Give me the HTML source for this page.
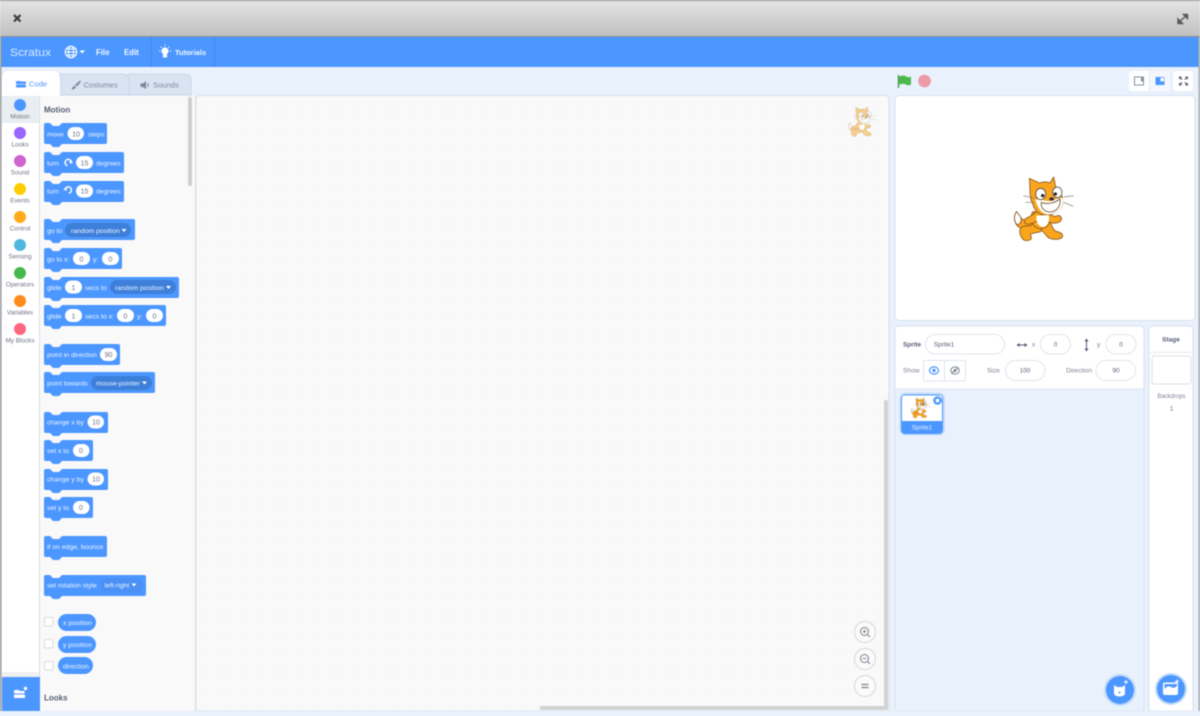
<!DOCTYPE html>
<html><head><meta charset="utf-8"><title>Scratux</title>
<style>
html,body{margin:0;padding:0;width:1200px;height:711px;overflow:hidden;background:#e9f1fc}
#root{position:absolute;left:0;top:0;width:1200px;height:711px;filter:blur(.4px)}
svg text{font-family:"Liberation Sans",sans-serif}
.w{fill:#eef4ff;font-size:6.85px}
.n{fill:#6b7185;font-size:7px;text-anchor:middle}
.c{fill:#6f7585;font-size:6.4px;text-anchor:middle}
.g{fill:#7d8392;font-size:6.6px}
.b{fill:#575e75;font-size:6.4px;font-weight:bold}
.v{fill:#575e75;font-size:6.4px;text-anchor:middle}
.bl{fill:#4c97ff}
.dd{fill:#3d7fd9}
</style></head>
<body><div id="root">
<svg width="1200" height="711" viewBox="0 0 1200 711" xmlns="http://www.w3.org/2000/svg">
<defs>
<linearGradient id="tb" x1="0" y1="0" x2="0" y2="1"><stop offset="0" stop-color="#e4e4e4"/><stop offset="1" stop-color="#bfbfbf"/></linearGradient>
<pattern id="dots" width="14" height="14" patternUnits="userSpaceOnUse"><rect x="6" y="6" width="1.2" height="1.2" fill="#ececec"/></pattern>
<symbol id="cat" viewBox="0 0 270 255">
<g stroke="#8a5a1e" stroke-width="2.6" stroke-linejoin="round">
<path d="M96 164C76 172 58 162 50 140C40 152 42 176 56 186C70 196 92 194 108 186Z" fill="#faa51d"/>
<path d="M50 140C40 152 42 170 52 180C62 176 66 168 62 156Z" fill="#fff"/>
<path d="M108 160L92 182L70 184C56 188 56 206 68 222C76 230 96 228 94 216C92 210 90 208 94 206L122 200L138 176Z" fill="#faa51d"/>
<path d="M118 168C114 186 128 200 140 212C146 224 174 226 186 218C192 208 182 202 172 200C162 198 158 190 154 178L150 160Z" fill="#faa51d"/>
<path d="M98 140C88 160 94 184 116 190C138 194 156 176 154 144Z" fill="#faa51d"/>
<path d="M150 146C158 154 166 156 172 152C182 150 188 160 182 168C172 178 152 176 138 166Z" fill="#faa51d"/>
<path d="M112 138C102 146 90 156 78 160C70 164 72 178 84 178C98 176 116 168 128 154Z" fill="#faa51d"/>
<path d="M88 40L118 54C130 50 142 50 150 54L161 36L168 70C196 92 198 130 160 146C126 158 104 142 98 116C86 96 92 68 88 40Z" fill="#faa51d"/>
</g>
<path d="M110 152C106 170 116 186 130 186C144 184 150 166 146 150Z" fill="#fff"/>
<path d="M106 104C112 126 124 150 150 148C176 146 192 126 190 100C176 96 166 106 152 108C136 110 122 100 106 104Z" fill="#fff"/>
<path d="M124 112C142 120 164 114 180 102C184 124 168 142 148 141C132 140 122 128 124 112Z" fill="#fff" stroke="#6a4a1e" stroke-width="2.4"/>
<ellipse cx="122" cy="87" rx="15" ry="17" fill="#fff" stroke="#444" stroke-width="2.4"/>
<ellipse cx="172" cy="82" rx="14" ry="16" fill="#fff" stroke="#444" stroke-width="2.4"/>
<circle cx="128" cy="92" r="5" fill="#222"/><circle cx="166" cy="87" r="5" fill="#222"/>
<ellipse cx="155" cy="102" rx="7" ry="5" fill="#2a2a3a"/>
<path d="M70 92L104 100M76 112L102 112M192 96L222 92M190 112L220 124" stroke="#777" stroke-width="2" fill="none"/>
</symbol>
</defs>

<!-- window title bar -->
<rect x="0" y="0" width="1200" height="37" fill="url(#tb)"/>
<rect x="0" y="0" width="1200" height="1" fill="#8f8f8f"/>
<rect x="0" y="36" width="1200" height="1" fill="#8d8d8d"/>
<path d="M14 15L20.500 21.500M20.500 15L14 21.500" stroke="#3c3c3c" stroke-width="2.200"/>
<g stroke="#5a5a5a" stroke-width="1.400" fill="#5a5a5a"><path d="M1179 22L1187 15" fill="none"/><path d="M1183.500 14.500H1187.500V18.500Z"/><path d="M1178 19V23.500H1182.500Z"/></g>

<!-- menu bar -->
<rect x="0" y="37" width="1200" height="30" fill="#4c97ff"/>
<text x="10" y="56" font-size="11" fill="#dbe9ff" textLength="41" lengthAdjust="spacingAndGlyphs">Scratux</text>
<g fill="none" stroke="#fff" stroke-width="1"><circle cx="71" cy="52" r="5.800"/><ellipse cx="71" cy="52" rx="2.600" ry="5.800"/><path d="M65.200 52H76.800M66 49H76M66 55H76"/></g>
<path d="M79.500 50.500H85L82.250 53.500Z" fill="#fff"/>
<text x="96" y="55" font-size="7.800" font-weight="bold" fill="#fff" fill-opacity=".93">File</text>
<text x="124" y="55" font-size="7.800" font-weight="bold" fill="#fff" fill-opacity=".93">Edit</text>
<rect x="151" y="37" width="1" height="30" fill="#4389e8"/><rect x="214" y="37" width="1" height="30" fill="#4389e8"/>
<g fill="#fff"><circle cx="165" cy="51" r="3.600"/><rect x="163" y="54" width="4" height="3.500"/></g>
<path d="M165 44.500V45.800M159 51H160.200M170 51H171.200M160.700 46.700L161.600 47.600M169.300 46.700L168.400 47.600" stroke="#fff" stroke-width="1"/>
<text x="175" y="55" font-size="7.500" font-weight="bold" fill="#fff" fill-opacity=".93">Tutorials</text>

<!-- body bg -->
<rect x="0" y="67" width="1200" height="644" fill="#e9f1fc"/>
<rect x="0" y="37" width="1.500" height="674" fill="#9a9a9a"/>
<rect x="1198.500" y="37" width="1.500" height="674" fill="#a8a8a8"/>

<!-- tabs -->
<path d="M129 95V81Q129 74 122 74H60V95Z" fill="#d9e3f2" stroke="#ccd6e6" stroke-width="1"/>
<path d="M191 95V81Q191 74 184 74H129Q127 74 129 78V95Z" fill="#d9e3f2" stroke="#ccd6e6" stroke-width="1"/>
<path d="M2 96V79Q2 71 10 71H52Q60 71 60 79V96Z" fill="#fff"/>
<g fill="#4c97ff"><rect x="16" y="81" width="5" height="3" rx=".8"/><rect x="21" y="81.500" width="5" height="2.500"/><rect x="16" y="84.500" width="10" height="3" rx=".8"/></g>
<text x="29" y="86.500" font-size="7.600" fill="#4c97ff">Code</text>
<path d="M71.500 89L74 85.500L76 87.500L73.500 89.500ZM75 85L80 80.500L81 81.500L77 86.500Z" fill="#7f8694"/>
<text x="83.500" y="87.500" font-size="7.600" fill="#80889a">Costumes</text>
<path d="M140.500 83.500H143L146 81V89L143 87H140.500Z" fill="#7f8694"/><path d="M147.500 83.200Q149 85 147.500 86.800" stroke="#7f8694" fill="none"/>
<text x="153" y="87.500" font-size="7.600" fill="#80889a">Sounds</text>

<!-- categories -->
<rect x="2" y="96" width="37" height="615" fill="#fff"/>
<rect x="2" y="96" width="37" height="27" fill="#e9eef2"/>
<rect x="39" y="96" width="1" height="615" fill="#d9dfe7"/>
<circle cx="20" cy="105" r="6" fill="#4c97ff"/><text class="c" x="20" y="118.500">Motion</text>
<circle cx="20" cy="133" r="6" fill="#9966ff"/><text class="c" x="20" y="146.500">Looks</text>
<circle cx="20" cy="161" r="6" fill="#cf63cf"/><text class="c" x="20" y="174.500">Sound</text>
<circle cx="20" cy="189" r="6" fill="#ffcc00"/><text class="c" x="20" y="202.500">Events</text>
<circle cx="20" cy="217" r="6" fill="#ffab19"/><text class="c" x="20" y="230.500">Control</text>
<circle cx="20" cy="245" r="6" fill="#4fb8dc"/><text class="c" x="20" y="258.500">Sensing</text>
<circle cx="20" cy="273" r="6" fill="#47b84f"/><text class="c" x="20" y="286.500">Operators</text>
<circle cx="20" cy="301" r="6" fill="#ff8c1a"/><text class="c" x="20" y="314.500">Variables</text>
<circle cx="20" cy="329" r="6" fill="#ff6680"/><text class="c" x="20" y="342.500">My Blocks</text>
<rect x="2" y="672" width="37" height="5" fill="#e4e4e4" opacity=".6"/>
<rect x="2" y="677" width="38" height="34" fill="#4c97ff"/>
<g fill="#fff"><rect x="14" y="690" width="5.500" height="3.500" rx=".8"/><rect x="19.500" y="691" width="5" height="2.500"/><rect x="14" y="694.500" width="11" height="3.500" rx=".8"/><circle cx="25.500" cy="688.500" r="1.700"/></g>

<!-- palette -->
<rect x="40" y="96" width="155" height="615" fill="#f9f9f9"/>
<rect x="195" y="96" width="1" height="615" fill="#d9dfe7"/>
<rect x="188" y="97" width="4" height="89" rx="2" fill="#cfcfcf"/>
<text x="44" y="112.500" font-size="8" font-weight="bold" fill="#575e75">Motion</text>
<text x="44" y="700.500" font-size="8" font-weight="bold" fill="#575e75">Looks</text>

<!-- blocks -->
<g class="bl">
<path d="M44 125q0-2 2-2h4l3 3h6l3-3h43q2 0 2 2v17q0 2-2 2h-43l-3 3h-6l-3-3h-4q-2 0-2-2z"/>
<path d="M44 154q0-2 2-2h4l3 3h6l3-3h60q2 0 2 2v17q0 2-2 2h-60l-3 3h-6l-3-3h-4q-2 0-2-2z"/>
<path d="M44 183q0-2 2-2h4l3 3h6l3-3h60q2 0 2 2v17q0 2-2 2h-60l-3 3h-6l-3-3h-4q-2 0-2-2z"/>
<path d="M44 221q0-2 2-2h4l3 3h6l3-3h71q2 0 2 2v17q0 2-2 2h-71l-3 3h-6l-3-3h-4q-2 0-2-2z"/>
<path d="M44 250q0-2 2-2h4l3 3h6l3-3h58q2 0 2 2v17q0 2-2 2h-58l-3 3h-6l-3-3h-4q-2 0-2-2z"/>
<path d="M44 279q0-2 2-2h4l3 3h6l3-3h115q2 0 2 2v17q0 2-2 2h-115l-3 3h-6l-3-3h-4q-2 0-2-2z"/>
<path d="M44 307q0-2 2-2h4l3 3h6l3-3h102q2 0 2 2v17q0 2-2 2h-102l-3 3h-6l-3-3h-4q-2 0-2-2z"/>
<path d="M44 346q0-2 2-2h4l3 3h6l3-3h56q2 0 2 2v17q0 2-2 2h-56l-3 3h-6l-3-3h-4q-2 0-2-2z"/>
<path d="M44 374q0-2 2-2h4l3 3h6l3-3h91q2 0 2 2v17q0 2-2 2h-91l-3 3h-6l-3-3h-4q-2 0-2-2z"/>
<path d="M44 414q0-2 2-2h4l3 3h6l3-3h44q2 0 2 2v17q0 2-2 2h-44l-3 3h-6l-3-3h-4q-2 0-2-2z"/>
<path d="M44 442q0-2 2-2h4l3 3h6l3-3h29q2 0 2 2v17q0 2-2 2h-29l-3 3h-6l-3-3h-4q-2 0-2-2z"/>
<path d="M44 471q0-2 2-2h4l3 3h6l3-3h44q2 0 2 2v17q0 2-2 2h-44l-3 3h-6l-3-3h-4q-2 0-2-2z"/>
<path d="M44 499q0-2 2-2h4l3 3h6l3-3h29q2 0 2 2v17q0 2-2 2h-29l-3 3h-6l-3-3h-4q-2 0-2-2z"/>
<path d="M44 538q0-2 2-2h4l3 3h6l3-3h43q2 0 2 2v17q0 2-2 2h-43l-3 3h-6l-3-3h-4q-2 0-2-2z"/>
<path d="M44 577q0-2 2-2h4l3 3h6l3-3h82q2 0 2 2v17q0 2-2 2h-82l-3 3h-6l-3-3h-4q-2 0-2-2z"/>
<rect x="58" y="614" width="38" height="17" rx="8.500"/>
<rect x="58" y="636" width="38" height="17" rx="8.500"/>
<rect x="58" y="657" width="35" height="17" rx="8.500"/>
</g>
<!-- dropdowns -->
<g class="dd">
<rect x="65" y="223" width="66" height="14" rx="7"/>
<rect x="110" y="280" width="66" height="14" rx="7"/>
<rect x="91" y="376" width="61" height="14" rx="7"/>
<rect x="100" y="578.500" width="43" height="14" rx="7" fill="#4a90f5"/>
</g>
<!-- white pills -->
<g fill="#fff">
<rect x="67.500" y="127" width="16.500" height="13" rx="6.500"/>
<rect x="76" y="156" width="17" height="13" rx="6.500"/>
<rect x="76" y="184.500" width="17" height="13" rx="6.500"/>
<rect x="73" y="252" width="17" height="13" rx="6.500"/><rect x="102" y="252" width="17" height="13" rx="6.500"/>
<rect x="65" y="280.500" width="17" height="13" rx="6.500"/>
<rect x="65" y="309" width="17" height="13" rx="6.500"/><rect x="117" y="309" width="17" height="13" rx="6.500"/><rect x="146" y="309" width="17" height="13" rx="6.500"/>
<rect x="100" y="348" width="17" height="13" rx="6.500"/>
<rect x="87.500" y="415.500" width="16.500" height="13" rx="6.500"/>
<rect x="73" y="444" width="16.500" height="13" rx="6.500"/>
<rect x="87.500" y="472.500" width="16.500" height="13" rx="6.500"/>
<rect x="73" y="501" width="16.500" height="13" rx="6.500"/>
</g>
<!-- block text -->
<text class="w" x="47" y="136.500">move</text><text class="n" x="76" y="136.500">10</text><text class="w" x="88" y="136.500">steps</text>
<text class="w" x="47" y="165.500">turn</text><text class="n" x="84.500" y="165.500">15</text><text class="w" x="96" y="165.500">degrees</text>
<text class="w" x="47" y="193.500">turn</text><text class="n" x="84.500" y="193.500">15</text><text class="w" x="96" y="193.500">degrees</text>
<g fill="none" stroke="#fff" stroke-width="1.500"><path d="M71.500 162.500A3.200 3.200 0 1 0 67.500 165.700"/><path d="M65 191A3.200 3.200 0 1 1 69 194.200" transform="translate(0,-1)"/></g>
<path d="M70 159.500L73 163L69.500 163.500Z" fill="#fff"/><path d="M66.500 186.500L63.500 190L67 190.500Z" fill="#fff"/>
<text class="w" x="47" y="233">go to</text><text class="w" x="71" y="233">random position</text><path d="M121.500 229H126.500L124 232Z" fill="#fff"/>
<text class="w" x="47" y="261.500">go to x:</text><text class="n" x="81.500" y="261.500">0</text><text class="w" x="93" y="261.500">y:</text><text class="n" x="110.500" y="261.500">0</text>
<text class="w" x="47" y="290">glide</text><text class="n" x="73.500" y="290">1</text><text class="w" x="85" y="290">secs to</text><text class="w" x="115" y="290">random position</text><path d="M166 286H171L168.500 289Z" fill="#fff"/>
<text class="w" x="47" y="318.500">glide</text><text class="n" x="73.500" y="318.500">1</text><text class="w" x="85" y="318.500">secs to x:</text><text class="n" x="125.500" y="318.500">0</text><text class="w" x="137" y="318.500">y:</text><text class="n" x="154.500" y="318.500">0</text>
<text class="w" x="47" y="357">point in direction</text><text class="n" x="108.500" y="357">90</text>
<text class="w" x="47" y="385.500">point towards</text><text class="w" x="96" y="385.500">mouse-pointer</text><path d="M142 381.500H147L144.500 384.500Z" fill="#fff"/>
<text class="w" x="47" y="424.500">change x by</text><text class="n" x="96" y="424.500">10</text>
<text class="w" x="47" y="453">set x to</text><text class="n" x="81" y="453">0</text>
<text class="w" x="47" y="481.500">change y by</text><text class="n" x="96" y="481.500">10</text>
<text class="w" x="47" y="510">set y to</text><text class="n" x="81" y="510">0</text>
<text class="w" x="47" y="549">if on edge, bounce</text>
<text class="w" x="47" y="587.500">set rotation style</text><text class="w" x="104.500" y="587.500">left-right</text><path d="M131.500 583.500H136.500L134 586.500Z" fill="#fff"/>
<text class="w" x="63" y="625">x position</text>
<text class="w" x="63" y="647">y position</text>
<text class="w" x="63" y="668.500">direction</text>
<g fill="#fff" stroke="#dcdcdc" stroke-width="1"><rect x="44.500" y="617.500" width="8.500" height="8.500" rx="1.500"/><rect x="44.500" y="639.500" width="8.500" height="8.500" rx="1.500"/><rect x="44.500" y="661.500" width="8.500" height="8.500" rx="1.500"/></g>

<!-- workspace -->
<path d="M196 711V99Q196 95.500 200 95.500H885Q889 95.500 889 99V711Z" fill="#f9f9f9" stroke="#d9dfe7" stroke-width="1"/>
<rect x="197" y="97" width="691" height="614" fill="url(#dots)"/>
<use href="#cat" x="842" y="101" width="42" height="40" opacity=".5"/>
<rect x="884" y="400" width="4" height="310" rx="1" fill="#d2d2d2"/>
<rect x="540" y="706" width="344" height="4" rx="1" fill="#d2d2d2"/>
<g fill="#fafafa" stroke="#d6d6d6" stroke-width="1"><circle cx="865" cy="632" r="10.500"/><circle cx="865" cy="659" r="10.500"/><circle cx="865" cy="686" r="10.500"/></g>
<g fill="none" stroke="#7a8090" stroke-width="1"><circle cx="864.500" cy="631.500" r="4"/><path d="M867.500 634.500L870 637M862.800 631.500H866.200M864.500 629.800V633.200"/><circle cx="864.500" cy="658.500" r="4"/><path d="M867.500 661.500L870 664M862.800 658.500H866.200"/></g>
<path d="M861.500 684.500H868.500M861.500 687.500H868.500" stroke="#7a8090" stroke-width="1.200"/>

<!-- stage header -->
<path d="M898.500 75V88" stroke="#3f9a3f" stroke-width="1.300"/>
<path d="M899 76.500Q904 74.500 906 76.500Q909 78 911 76.500V84.500Q908 86 906 84.500Q903 83 899 84.500Z" fill="#4cb84c"/>
<circle cx="924.500" cy="81" r="6.300" fill="#ec9aa6"/>
<rect x="1129" y="71" width="41" height="20" rx="3" fill="#fff"/>
<rect x="1149" y="71" width="21" height="20" fill="#f4f8fe"/><rect x="1149" y="71" width="1" height="20" fill="#e3eaf5"/>
<rect x="1173" y="71" width="20" height="20" rx="3" fill="#fff"/>
<rect x="1134.500" y="77" width="9" height="8" fill="none" stroke="#8a8f9c" stroke-width="1"/><rect x="1141" y="77" width="3" height="4.500" fill="#8a8f9c"/>
<rect x="1155.500" y="77" width="9" height="8" fill="#4c97ff"/><rect x="1160.500" y="77.800" width="3.500" height="3.500" fill="#fff"/>
<g stroke="#575e75" stroke-width="1.300" fill="none"><path d="M1179.500 77L1182 79.500M1187.500 77L1185 79.500M1179.500 85L1182 82.500M1187.500 85L1185 82.500"/></g>
<g fill="#575e75"><path d="M1179 76.500H1182L1179 79.500ZM1188 76.500H1185L1188 79.500ZM1179 85.500H1182L1179 82.500ZM1188 85.500H1185L1188 82.500Z"/></g>

<!-- stage -->
<rect x="895" y="95.500" width="300" height="225" rx="4" fill="#fff" stroke="#d9e2ef" stroke-width="1"/>
<use href="#cat" x="1000" y="165" width="90" height="85"/>

<!-- sprite panel -->
<path d="M895 711V330Q895 326 899 326H1140Q1144 326 1144 330V711Z" fill="#e9f1fc" stroke="#d9e2ef" stroke-width="1"/>
<path d="M895.500 389V330Q895.500 326.500 899 326.500H1140Q1143.500 326.500 1143.500 330V389Z" fill="#fff"/>
<rect x="895.500" y="388.500" width="248" height="1" fill="#e0e7f1"/>
<text class="b" x="903" y="346.500">Sprite</text>
<g fill="#fff" stroke="#dfe5ee" stroke-width="1">
<rect x="925.500" y="334.500" width="79" height="19.500" rx="9.750"/>
<rect x="1040.500" y="334.500" width="30" height="19.500" rx="9.750"/>
<rect x="1106" y="334.500" width="30" height="19.500" rx="9.750"/>
<rect x="1005.500" y="360.500" width="39.500" height="20" rx="10"/>
<rect x="1096" y="360.500" width="39.500" height="20" rx="10"/>
<rect x="923.500" y="360.500" width="21" height="20.500" rx="1"/>
<rect x="944.500" y="360.500" width="21" height="20.500" rx="1"/>
</g>
<text class="v" x="944" y="346.500">Sprite1</text>
<path d="M1018 345H1026" stroke="#575e75" stroke-width="1"/><path d="M1016.500 345L1019.500 343V347ZM1027.500 345L1024.500 343V347Z" fill="#575e75"/>
<text class="g" x="1032" y="346.500">x</text><text class="v" x="1055.500" y="346.500">0</text>
<path d="M1086.500 340.500V349.500" stroke="#575e75" stroke-width="1"/><path d="M1086.500 338.500L1084.500 341.500H1088.500ZM1086.500 351.500L1084.500 348.500H1088.500Z" fill="#575e75"/>
<text class="g" x="1097" y="346.500">y</text><text class="v" x="1121" y="346.500">0</text>
<text class="g" x="903" y="372.500">Show</text>
<g fill="none"><ellipse cx="934" cy="370.500" rx="4.500" ry="3.600" stroke="#4c97ff" stroke-width="1.200"/><circle cx="934" cy="370.500" r="1.700" fill="#4c97ff"/>
<ellipse cx="955" cy="370.500" rx="4.200" ry="3.600" stroke="#7a8090" stroke-width="1"/><circle cx="955" cy="370.500" r="1.500" fill="#7a8090"/><path d="M951.500 373.500L958.500 367.500" stroke="#7a8090"/></g>
<text class="g" x="987" y="372.500">Size</text><text class="v" x="1025" y="372.500">100</text>
<text class="g" x="1066" y="372.500">Direction</text><text class="v" x="1116" y="372.500">90</text>

<!-- sprite tile -->
<rect x="899.500" y="392.500" width="45.500" height="43" rx="6" fill="#c6ddfb"/>
<rect x="901" y="394.500" width="42" height="39.500" rx="4" fill="#4c97ff"/>
<path d="M902 421V398Q902 395.500 904.500 395.500H939.500Q942 395.500 942 398V421Z" fill="#fff"/>
<use href="#cat" x="906" y="394" width="30" height="27"/>
<text x="922" y="429.500" font-size="6.500" fill="#e8f1ff" text-anchor="middle">Sprite1</text>
<circle cx="937.500" cy="400.500" r="4.300" fill="#4c97ff"/><rect x="935.800" y="398.800" width="3.400" height="3.400" fill="#fff"/>
<circle cx="1120" cy="690" r="16" fill="#c2dafb"/><circle cx="1120" cy="690" r="14" fill="#4c97ff"/>
<path d="M1114 685L1117 687H1122L1125 685V693Q1125 696.500 1119.500 696.500Q1114 696.500 1114 693Z" fill="#fff"/>
<circle cx="1119.500" cy="692.500" r="1" fill="#4c97ff"/>
<path d="M1126 680V684M1124 682H1128" stroke="#fff" stroke-width="1"/>

<!-- stage selector -->
<path d="M1149 711V330Q1149 326 1153 326H1189Q1193 326 1193 330V711Z" fill="#fff" stroke="#d9e2ef" stroke-width="1"/>
<rect x="1149.500" y="352" width="43" height="1" fill="#e6ebf2"/>
<text x="1171" y="341.500" font-size="6.500" font-weight="bold" fill="#575e75" text-anchor="middle">Stage</text>
<rect x="1152" y="356" width="39" height="28" rx="2" fill="#fff" stroke="#dcdfe4" stroke-width="1"/>
<text x="1171.500" y="398" font-size="6" fill="#7d8392" text-anchor="middle">Backdrops</text>
<text x="1171.500" y="410.500" font-size="6.500" fill="#6a7083" text-anchor="middle">1</text>
<circle cx="1171" cy="689" r="16" fill="#c2dafb"/><circle cx="1171" cy="689" r="14" fill="#4c97ff"/>
<rect x="1163" y="682.500" width="15" height="12.500" rx="2" fill="#fff"/>
<path d="M1164.500 689Q1168 685 1171 687Q1174 689 1177 686V684H1164.500Z" fill="#4c97ff"/>
<path d="M1177 679.500V683.500M1175 681.500H1179" stroke="#fff" stroke-width="1"/>
</svg>
</div></body></html>
